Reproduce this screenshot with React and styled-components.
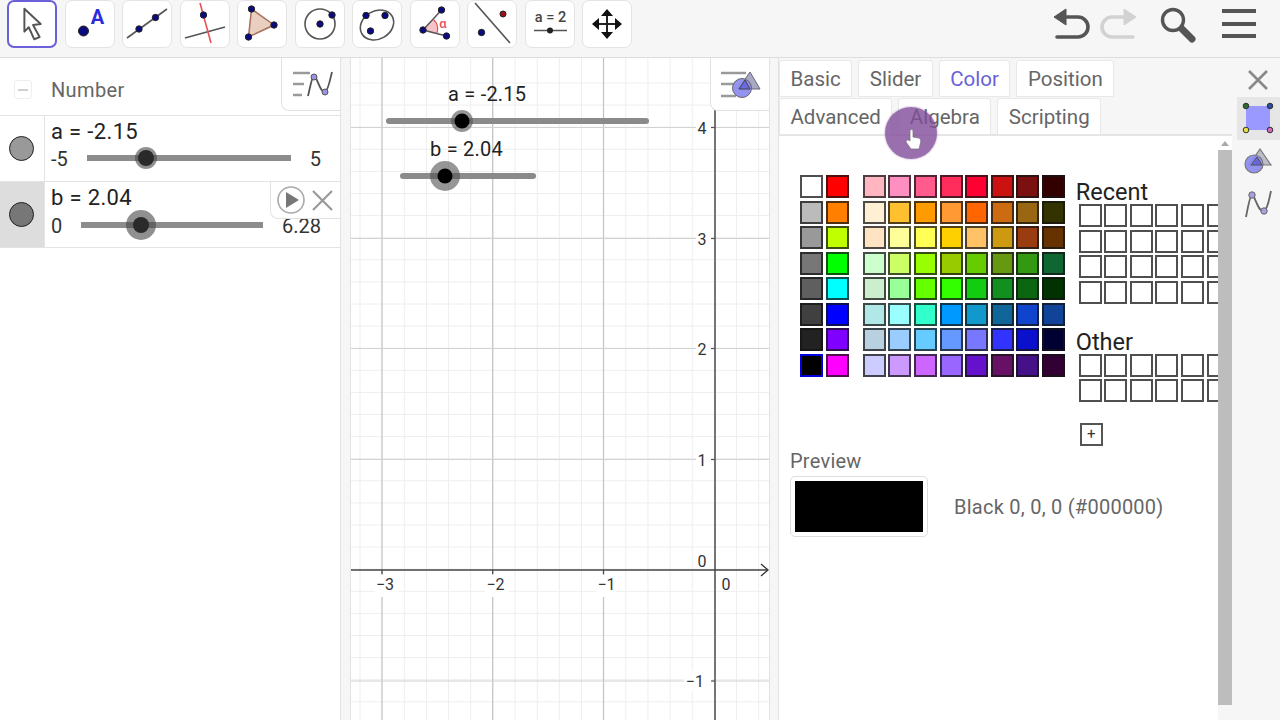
import React from 'react';
import styled, { createGlobalStyle } from 'styled-components';

const Global = createGlobalStyle`
  html, body { margin: 0; padding: 0; background: #fff; }
  body { font-family: Roboto, "Liberation Sans", sans-serif; }
  * { box-sizing: border-box; }
`;
const Page = styled.div`
  width: 1280px; height: 720px; overflow: hidden; position: relative;
  display: flex; flex-direction: column; background: #fff;
`;
const Toolbar = styled.header`
  height: 58px; flex: none; background: #f6f6f6; border-bottom: 1px solid #ddd;
  display: flex; padding-left: 7px; gap: 7.55px;
`;
const ToolButton = styled.div`
  width: 50px; height: 48px; background: #fff; border-radius: 7px; flex: none;
  border: ${p => (p.$active ? '2px solid #6a60d8' : '1px solid #e4e4e4')};
  display: flex; align-items: center; justify-content: center;
  svg { display: block; flex: none; }
`;
const ToolbarEnd = styled.div`
  margin-left: auto; display: flex; align-items: flex-start;
  svg { display: block; }
`;
const Main = styled.main` flex: 1; display: flex; min-height: 0; `;
const AlgebraPanel = styled.section`
  width: 340px; flex: none; position: relative; background: #fff;
`;
const AlgebraHeader = styled.div`
  height: 58px; padding: 22px 0 0 14px; display: flex; align-items: flex-start;
  border-bottom: 1px solid #e3e3e3;
`;
const CollapseBox = styled.div`
  width: 18px; height: 19px; border: 1px solid #eee; border-radius: 3px; flex: none;
  display: flex; align-items: center; justify-content: center;
  &::before { content: ''; width: 10px; height: 2px; background: #d0d0d0; }
`;
const HeaderTitle = styled.div`
  margin-left: 19px; font-size: 20px; line-height: 20px; color: #666; letter-spacing: .35px;
`;
const StyleTab = styled.div`
  position: absolute; top: 0; right: 0; width: 59px; height: 53px; background: #fff;
  border: 1px solid #e2e2e2; border-top: none; border-right: none; border-bottom-left-radius: 8px;
  svg { display: block; }
`;
const ObjectRow = styled.div`
  height: 66px; display: flex; border-bottom: 1px solid #e3e3e3; position: relative;
`;
const MarbleCell = styled.div`
  width: 45px; flex: none; display: flex; align-items: center; justify-content: center; padding-right: 1px;
  background: ${p => (p.$selected ? '#dddddd' : '#fff')};
  border-right: 1px solid #e3e3e3;
`;
const Marble = styled.div`
  width: 25px; height: 25px; border-radius: 50%; border: 1px solid #222;
  background: ${p => p.$fill};
`;
const RowBody = styled.div`
  flex: 1; display: flex; flex-direction: column; padding: 3px 19px 0 6px; min-width: 0;
`;
const Definition = styled.div`
  font-size: 22px; line-height: 26px; color: #222; letter-spacing: .35px;
`;
const SliderLine = styled.div`
  display: flex; align-items: center; gap: 19px; height: 28px; margin-top: ${p => p.$top}px;
`;
const Bound = styled.span`
  font-size: 20px; color: #333; flex: none; padding-top: 2px;
`;
const Track = styled.div`
  flex: 1; height: 6px; background: #8c8c8c; position: relative;
`;
const Thumb = styled.div`
  position: absolute; top: 50%; width: 16px; height: 16px; margin: -8px 0 0 -8px; border-radius: 50%; background: #000;
  &::after {
    content: ''; position: absolute; left: 50%; top: 50%;
    width: ${p => p.$halo}px; height: ${p => p.$halo}px;
    margin-left: ${p => -p.$halo / 2}px; margin-top: ${p => -p.$halo / 2}px;
    border-radius: 50%; background: rgba(70,70,70,.6);
  }
`;
const RowActions = styled.div`
  position: absolute; top: 0; right: 0; width: 70px; height: 37px; background: #fff;
  border: 1px solid #e2e2e2; border-top: none; border-right: none; border-bottom-left-radius: 8px;
  svg { display: block; }
`;
const Splitter = styled.div`
  width: ${p => p.$w}px; flex: none; background: #f6f6f6;
  border-left: 1px solid #e2e2e2; border-right: 1px solid #e2e2e2;
`;
const GraphicsView = styled.section`
  width: 418px; flex: none; position: relative; background: #fff;
  svg { display: block; }
  text { font-family: Roboto, "Liberation Sans", sans-serif; }
`;
const PropsPanel = styled.section`
  flex: 1; display: flex; min-width: 0; background: #f6f6f6;
`;
const PropsColumn = styled.div`
  flex: 1; display: flex; flex-direction: column; min-width: 0;
`;
const TabRows = styled.div`
  padding: 2px 0 0 0; display: flex; flex-direction: column; gap: 1px; height: 78px; flex: none;
  border-bottom: 2px solid #e4e4e4;
`;
const TabRow = styled.div` display: flex; gap: 6px; height: 37px; `;
const Tab = styled.div`
  height: 37px; padding: 0 10.5px; background: #fff; border: 1px solid #e8e8e8; border-radius: 3px 3px 0 0;
  font-size: 20.5px; line-height: 36px; color: ${p => (p.$active ? '#6a60d8' : '#666')};
`;
const PropsBody = styled.div` flex: 1; display: flex; min-height: 0; `;
const ScrollArea = styled.div`
  width: 439px; flex: none; background: #fff; overflow: hidden; padding: 39px 0 0 21px;
`;
const Scrollbar = styled.div`
  width: 14px; flex: none; background: #fff; position: relative; margin-bottom: 15px;
  &::before {
    content: ''; position: absolute; left: 3px; top: 5px; border: 4px solid transparent;
    border-top: none; border-bottom: 5px solid #aaa;
  }
  &::after { content: ''; position: absolute; left: 0; right: 0; top: 14px; bottom: 0; background: #bdbdbd; }
`;
const SideRail = styled.div`
  width: 48px; flex: none; display: flex; flex-direction: column; align-items: flex-end;
  svg { display: block; }
`;
const RailClose = styled.div` width: 48px; height: 39px; `;
const RailIcon = styled.div`
  width: 43px; height: 43px; background: ${p => (p.$selected ? '#e6e6e6' : 'transparent')};
`;
const PaletteRow = styled.div` display: flex; align-items: flex-start; width: 460px; `;
const SwatchGrid = styled.div`
  display: grid; grid-template-columns: repeat(${p => p.$cols}, 23px); grid-auto-rows: 23px; gap: 2.55px;
  margin-left: ${p => p.$left || 0}px; flex: none;
`;
const Swatch = styled.div`
  border: 2px solid ${p => (p.$selected ? '#0000e0' : 'rgba(20,20,20,.75)')};
  background: ${p => p.$c || '#fff'};
`;
const CustomColumn = styled.div` margin-left: 11px; flex: none; `;
const CustomLabel = styled.div`
  font-size: 23.5px; line-height: 26px; color: #222; height: 26px; margin-top: ${p => p.$top}px;
`;
const CustomGrid = styled(SwatchGrid)` margin: -1px 0 0 3px; `;
const PlusButton = styled.div`
  width: 23px; height: 23px; border: 2px solid #555; margin: 21px 0 0 4px;
  display: flex; align-items: center; justify-content: center;
  font-size: 15px; line-height: 1; color: #333;
`;
const PreviewLabel = styled.div`
  font-size: 20px; line-height: 24px; color: #666; margin: 3px 0 3px -10px; letter-spacing: .25px;
`;
const PreviewRow = styled.div` display: flex; align-items: center; margin-left: -10px; `;
const PreviewBox = styled.div`
  width: 138px; height: 61px; padding: 4px; border: 1px solid #ddd; border-radius: 5px; background: #fff;
  &::before { content: ''; display: block; width: 100%; height: 100%; background: #000; }
`;
const ColorName = styled.div`
  font-size: 20px; color: #666; margin-left: 26px; letter-spacing: .25px;
`;
const ClickMark = styled.div`
  position: absolute; left: 885px; top: 107px; width: 52px; height: 52px; border-radius: 50%;
  background: rgba(128,76,152,.8); box-shadow: 0 0 2px rgba(128,76,152,.7);
  svg { display: block; }
`;

const NAVY = '#0b0b80';
const Dot = ({ x, y, r = 4.5, c = NAVY }) => <circle cx={x} cy={y} r={r} fill={c} stroke="#222" strokeWidth="1" />;
const Ic = ({ children }) => <svg width="50" height="48" viewBox="0 0 50 48">{children}</svg>;

const tools = [
  <svg width="50" height="48" viewBox="2 2 46 44" key="m"><path d="M18 10 33 24 26 25 32 36 27 38 22 27 18 31Z" fill="#fff" stroke="#555" strokeWidth="1.8" strokeLinejoin="round" /></svg>,
  <Ic key="p"><Dot x={18.5} y={31} r={5} /><text x={32.5} y={23.5} textAnchor="middle" fontFamily="Roboto, sans-serif" fontWeight="700" fontSize="20" fill="#2b2bdd">A</text></Ic>,
  <Ic key="l"><line x1="5" y1="38" x2="45" y2="9" stroke="#555" strokeWidth="1.6" /><Dot x={17} y={29} r={3.2} /><Dot x={33.5} y={17.5} r={3.2} /></Ic>,
  <Ic key="pr"><line x1="5" y1="38" x2="45" y2="27" stroke="#555" strokeWidth="1.6" /><line x1="20" y1="3" x2="31" y2="43" stroke="#e8505a" strokeWidth="1.6" /><Dot x={23.5} y={15} r={3.2} /></Ic>,
  <Ic key="po"><path d="M14.5 9 37 25 11.5 37Z" fill="#e9cfc0" stroke="#a8705a" strokeWidth="1.5" /><Dot x={14.5} y={9} r={3.2} /><Dot x={37} y={25} r={3.2} /><Dot x={11.5} y={37} r={3.2} /></Ic>,
  <Ic key="c"><circle cx="25" cy="24" r="15" fill="none" stroke="#555" strokeWidth="1.6" /><Dot x={25} y={24} r={3.2} /><Dot x={37} y={15} r={3.2} /></Ic>,
  <Ic key="e"><ellipse cx="25" cy="25" rx="17.5" ry="14" transform="rotate(-30 25 25)" fill="none" stroke="#555" strokeWidth="1.6" /><Dot x={14} y={15.5} r={3.2} /><Dot x={33} y={15.5} r={3.2} /><Dot x={18.5} y={31} r={3.2} /></Ic>,
  <Ic key="a"><path d="M13 30 23 19A14 14 0 0 1 27 33.5Z" fill="#f6c4c8" /><path d="M31.5 10 13 30 36.500 36" fill="none" stroke="#555" strokeWidth="1.5" /><path d="M23 19A14 14 0 0 1 27 33.5" fill="none" stroke="#e8505a" strokeWidth="1.2" /><Dot x={13} y={30} r={3.2} /><Dot x={31.5} y={10} r={3.2} /><Dot x={36.5} y={36} r={3.2} /><text x={33} y={28} textAnchor="middle" fontFamily="Roboto, sans-serif" fontSize="13" fontWeight="500" fill="#e8505a">α</text></Ic>,
  <Ic key="r"><line x1="8" y1="3" x2="43" y2="43" stroke="#555" strokeWidth="1.6" /><Dot x={14.5} y={32.5} r={3.2} /><Dot x={36} y={14} r={3} c="#a01018" /></Ic>,
  <Ic key="s"><text x={25.5} y={22} textAnchor="middle" fontFamily="Roboto, sans-serif" fontSize="14.5" fontWeight="500" fill="#444">a = 2</text><line x1="9" y1="30.5" x2="42" y2="30.5" stroke="#555" strokeWidth="1.5" /><circle cx="25" cy="30.5" r="3" fill="#222" /></Ic>,
  <Ic key="mv"><path d="M25 10V38M11 24H39" stroke="#222" strokeWidth="2" /><path d="M25 9 31 16H19ZM25 39 31 32H19ZM10 24 17 18V30ZM40 24 33 18V30Z" fill="#111" /></Ic>,
];

const paletteLeft = ['#ffffff','#ff0000','#bbbbbb','#ff8000','#999999','#c0ff00','#777777','#00ff00','#5f5f5f','#00ffff','#404040','#0000ff','#222222','#8000ff','#000000','#ff00ff'];
const paletteMain = [
  '#ffb6c1','#ff8fc0','#ff5c8d','#ff2d5c','#ff0033','#cc1111','#7a1010','#330000',
  '#ffefd5','#ffc030','#ff9a00','#ff9933','#ff6600','#cc6b10','#996611','#333300',
  '#ffe4c4','#ffff99','#ffff55','#ffd000','#ffc266','#cc9911','#993d11','#663300',
  '#ccffcc','#ccff66','#99ff00','#99cc00','#66cc00','#669911','#339911','#0f6633',
  '#cceecc','#99ff99','#66ff00','#33ff00','#11cc11','#118f1f','#0b660f','#003300',
  '#b0e8e8','#99ffff','#33ffcc','#0099ff','#1199cc','#116699','#1144cc','#114499',
  '#b8d0e0','#99ccff','#66ccff','#6699ff','#7777ff','#3333ff','#0a10cc','#000033',
  '#ccccff','#cc99ff','#cc66ff','#9966ff','#6611cc','#661166','#441188','#330033',
];

const XS = [382, 492.7, 603.5, 715];
const YS = [127.5, 238.5, 348.5, 459.5, 570, 681];
const minorX = []; for (let x = 360; x < 769; x += 22.15) minorX.push(x);
const minorY = []; for (let y = 83; y < 720; y += 22.1) minorY.push(y);

const GraphLabel = ({ x, y, a = 'middle', children }) => (
  <text x={x} y={y} fontSize="16" fill="#333" textAnchor={a}>{children}</text>
);
const GraphSlider = ({ x1, x2, y, t, halo, label, lx }) => (
  <g>
    <text x={lx} y={y - 20.5} fontSize="20" fill="#222" letterSpacing=".22">{label}</text>
    <line x1={x1} y1={y} x2={x2} y2={y} stroke="#8a8a8a" strokeWidth="6" strokeLinecap="round" />
    <circle cx={t} cy={y} r={halo} fill="#555" fillOpacity=".62" />
    <circle cx={t} cy={y} r="7.5" fill="#000" />
  </g>
);

const Graph = () => (
  <svg width="418" height="662" viewBox="351 58 418 662">
    {minorX.map(x => <line key={x} x1={x} y1="58" x2={x} y2="720" stroke="#eeeeee" strokeWidth="1" />)}
    {minorY.map(y => <line key={y} x1="351" y1={y} x2="769" y2={y} stroke="#eeeeee" strokeWidth="1" />)}
    {XS.slice(0, 3).map(x => <line key={x} x1={x} y1="58" x2={x} y2="720" stroke="#c4c4c4" strokeWidth="1.2" />)}
    {YS.filter(y => y !== 570).map(y => <line key={y} x1="351" y1={y} x2="769" y2={y} stroke="#d2d2d2" strokeWidth="1.2" />)}
    <rect x="375" y="575" width="24" height="22" fill="#fff" />
    <rect x="485" y="575" width="24" height="22" fill="#fff" />
    <rect x="596" y="575" width="20" height="22" fill="#fff" />
    <rect x="696" y="118" width="16" height="20" fill="#fff" />
    <rect x="696" y="229" width="16" height="20" fill="#fff" />
    <rect x="696" y="339" width="16" height="20" fill="#fff" />
    <rect x="696" y="450" width="16" height="20" fill="#fff" />
    <rect x="684" y="671" width="28" height="20" fill="#fff" />
    <line x1="715" y1="58" x2="715" y2="720" stroke="#666" strokeWidth="1.8" />
    <line x1="351" y1="570" x2="767" y2="570" stroke="#444" strokeWidth="1.3" />
    <path d="M761 564 768 570 761 576" fill="none" stroke="#333" strokeWidth="1.3" />
    {XS.slice(0, 3).map(x => <line key={x} x1={x} y1="570" x2={x} y2="574" stroke="#444" strokeWidth="1.2" />)}
    {YS.filter(y => y !== 570).map(y => <line key={y} x1="711" y1={y} x2="715" y2={y} stroke="#555" strokeWidth="1.2" />)}
    <GraphLabel x={385} y={590}>−3</GraphLabel>
    <GraphLabel x={495.5} y={590}>−2</GraphLabel>
    <GraphLabel x={606.5} y={590}>−1</GraphLabel>
    <GraphLabel x={726} y={590}>0</GraphLabel>
    <GraphLabel x={706.5} y={567} a="end">0</GraphLabel>
    <GraphLabel x={706.5} y={134} a="end">4</GraphLabel>
    <GraphLabel x={706.5} y={245} a="end">3</GraphLabel>
    <GraphLabel x={706.5} y={355} a="end">2</GraphLabel>
    <GraphLabel x={706.5} y={466} a="end">1</GraphLabel>
    <GraphLabel x={704} y={687} a="end">−1</GraphLabel>
    <GraphSlider x1={389} x2={646} y={121} t={462} halo={11} label="a = -2.15" lx={448} />
    <GraphSlider x1={403} x2={533} y={176} t={445} halo={15} label="b = 2.04" lx={430} />
  </svg>
);

const AlgebraStyleIcon = () => (
  <svg width="58" height="52" viewBox="282 58 58 52">
    <path d="M293 73H310M293 84H304M293 95H302" stroke="#9a9a9a" strokeWidth="2.6" fill="none" />
    <path d="M308 96C310 88 312 76 314 76C317 76 320 93 325 92C328 91 330 80 332 72" stroke="#555" strokeWidth="1.8" fill="none" />
    <circle cx="314" cy="77" r="3" fill="#9a94e6" stroke="#555" />
    <circle cx="325" cy="92" r="3" fill="#9a94e6" stroke="#555" />
  </svg>
);
const GraphicsStyleIcon = () => (
  <svg width="58" height="52" viewBox="711 58 58 52">
    <path d="M721 73H746M721 84H735M721 96H736" stroke="#9a9a9a" strokeWidth="2.6" fill="none" />
    <path d="M750 72 760 89H738Z" fill="#a9a9c4" stroke="#667" strokeWidth="1" />
    <circle cx="742" cy="88" r="9.5" fill="#8888ee" fillOpacity=".9" stroke="#666" strokeWidth="1" />
    <path d="M745 80 750 89H739Z" fill="#6a6ae0" stroke="#444" strokeWidth="1" />
  </svg>
);

const cellsEmpty = n => Array.from({ length: n }, (_, i) => <Swatch key={i} />);

export default function App() {
  return (
    <Page>
      <Global />
      <Toolbar>
        {tools.map((t, i) => <ToolButton key={i} $active={i === 0}>{t}</ToolButton>)}
        <ToolbarEnd>
          <svg width="230" height="57" viewBox="1050 0 230 57">
            <path d="M1057 37H1078A10 10 0 0 0 1078 17H1062" fill="none" stroke="#555" strokeWidth="3.6" strokeLinecap="round" />
            <path d="M1054 17 1066 9V25Z" fill="#555" stroke="#555" strokeWidth="1" strokeLinejoin="round" />
            <path d="M1133 37H1112A10 10 0 0 1 1112 17H1128" fill="none" stroke="#d2d2d2" strokeWidth="3.6" strokeLinecap="round" />
            <path d="M1136 17 1124 9V25Z" fill="#d2d2d2" stroke="#d2d2d2" strokeWidth="1" strokeLinejoin="round" />
            <circle cx="1173" cy="20" r="10.5" fill="none" stroke="#555" strokeWidth="3.4" />
            <path d="M1182 29 1192 39" stroke="#555" strokeWidth="7" strokeLinecap="round" />
            <path d="M1222 11H1256M1222 24H1256M1222 36H1256" stroke="#555" strokeWidth="4" />
          </svg>
        </ToolbarEnd>
      </Toolbar>
      <Main>
        <AlgebraPanel>
          <AlgebraHeader>
            <CollapseBox />
            <HeaderTitle>Number</HeaderTitle>
          </AlgebraHeader>
          <StyleTab><AlgebraStyleIcon /></StyleTab>
          <ObjectRow>
            <MarbleCell><Marble $fill="#999" /></MarbleCell>
            <RowBody>
              <Definition>a = -2.15</Definition>
              <SliderLine $top={-1}>
                <Bound>-5</Bound>
                <Track><Thumb $halo={22} style={{ left: '28.9%' }} /></Track>
                <Bound>5</Bound>
              </SliderLine>
            </RowBody>
          </ObjectRow>
          <ObjectRow>
            <MarbleCell $selected><Marble $fill="#777" /></MarbleCell>
            <RowBody>
              <Definition>b = 2.04</Definition>
              <SliderLine $top={0}>
                <Bound>0</Bound>
                <Track><Thumb $halo={30} style={{ left: '32.6%' }} /></Track>
                <Bound>6.28</Bound>
              </SliderLine>
            </RowBody>
            <RowActions>
              <svg width="69" height="36" viewBox="271 182 69 36">
                <circle cx="291" cy="200" r="13" fill="none" stroke="#aaa" strokeWidth="1.6" />
                <path d="M286 192 299 200 286 208Z" fill="#777" />
                <path d="M313 191 332 210M332 191 313 210" stroke="#999" strokeWidth="2.2" />
              </svg>
            </RowActions>
          </ObjectRow>
        </AlgebraPanel>
        <Splitter $w={11} />
        <GraphicsView>
          <Graph />
          <StyleTab><GraphicsStyleIcon /></StyleTab>
        </GraphicsView>
        <Splitter $w={10} />
        <PropsPanel>
          <PropsColumn>
            <TabRows>
              <TabRow>
                <Tab>Basic</Tab>
                <Tab>Slider</Tab>
                <Tab $active>Color</Tab>
                <Tab>Position</Tab>
              </TabRow>
              <TabRow>
                <Tab>Advanced</Tab>
                <Tab>Algebra</Tab>
                <Tab>Scripting</Tab>
              </TabRow>
            </TabRows>
            <PropsBody>
              <ScrollArea>
                <PaletteRow>
                  <SwatchGrid $cols={2}>
                    {paletteLeft.map((c, i) => <Swatch key={i} $c={c} $selected={i === 14} />)}
                  </SwatchGrid>
                  <SwatchGrid $cols={8} $left={14.4}>
                    {paletteMain.map((c, i) => <Swatch key={i} $c={c} />)}
                  </SwatchGrid>
                  <CustomColumn>
                    <CustomLabel $top={4}>Recent</CustomLabel>
                    <CustomGrid $cols={6}>{cellsEmpty(24)}</CustomGrid>
                    <CustomLabel $top={25}>Other</CustomLabel>
                    <CustomGrid $cols={6}>{cellsEmpty(12)}</CustomGrid>
                    <PlusButton>+</PlusButton>
                  </CustomColumn>
                </PaletteRow>
                <PreviewLabel>Preview</PreviewLabel>
                <PreviewRow>
                  <PreviewBox />
                  <ColorName>Black 0, 0, 0 (#000000)</ColorName>
                </PreviewRow>
              </ScrollArea>
              <Scrollbar />
            </PropsBody>
          </PropsColumn>
          <SideRail>
            <RailClose>
              <svg width="48" height="39" viewBox="1232 58 48 39">
                <path d="M1249 71 1267 89M1267 71 1249 89" stroke="#888" strokeWidth="2.6" />
              </svg>
            </RailClose>
            <RailIcon $selected>
              <svg width="43" height="43" viewBox="1237 97 43 43">
                <rect x="1246" y="106" width="24" height="24" fill="#9999ff" />
                <circle cx="1246" cy="106" r="2.8" fill="#2d6a2d" stroke="#333" />
                <circle cx="1270" cy="106" r="2.8" fill="#2a4f9a" stroke="#333" />
                <circle cx="1246" cy="130" r="2.8" fill="#e8e040" stroke="#333" />
                <circle cx="1270" cy="130" r="2.8" fill="#d868b8" stroke="#333" />
              </svg>
            </RailIcon>
            <RailIcon>
              <svg width="43" height="43" viewBox="1237 141 43 43">
                <path d="M1260 150 1271 166H1249Z" fill="#bdbdc8" stroke="#777" strokeWidth="1.2" />
                <circle cx="1254" cy="165" r="9" fill="#8888ee" fillOpacity=".9" stroke="#777" strokeWidth="1.2" />
                <path d="M1257 158 1262 166H1251Z" fill="#6666dd" stroke="#555" strokeWidth="1" />
              </svg>
            </RailIcon>
            <RailIcon>
              <svg width="43" height="43" viewBox="1237 184 43 43">
                <path d="M1246 218C1248 208 1250 196 1252 196C1255 196 1258 214 1264 212C1268 210 1269 200 1271 192" fill="none" stroke="#666" strokeWidth="1.8" />
                <circle cx="1252" cy="196" r="3.2" fill="#a8a0e0" stroke="#666" />
                <circle cx="1264" cy="212" r="3.2" fill="#a8a0e0" stroke="#666" />
              </svg>
            </RailIcon>
          </SideRail>
        </PropsPanel>
      </Main>
      <ClickMark>
        <svg width="52" height="52" viewBox="885 107 52 52">
          <path d="M910 131C910 129 913 129 913 131V137L919 138C921 139 921 141 920.500 143L919 149H911L906 142C906 140 908 139 910 141Z" fill="#fff" stroke="#7a6a80" strokeWidth=".7" />
        </svg>
      </ClickMark>
    </Page>
  );
}
